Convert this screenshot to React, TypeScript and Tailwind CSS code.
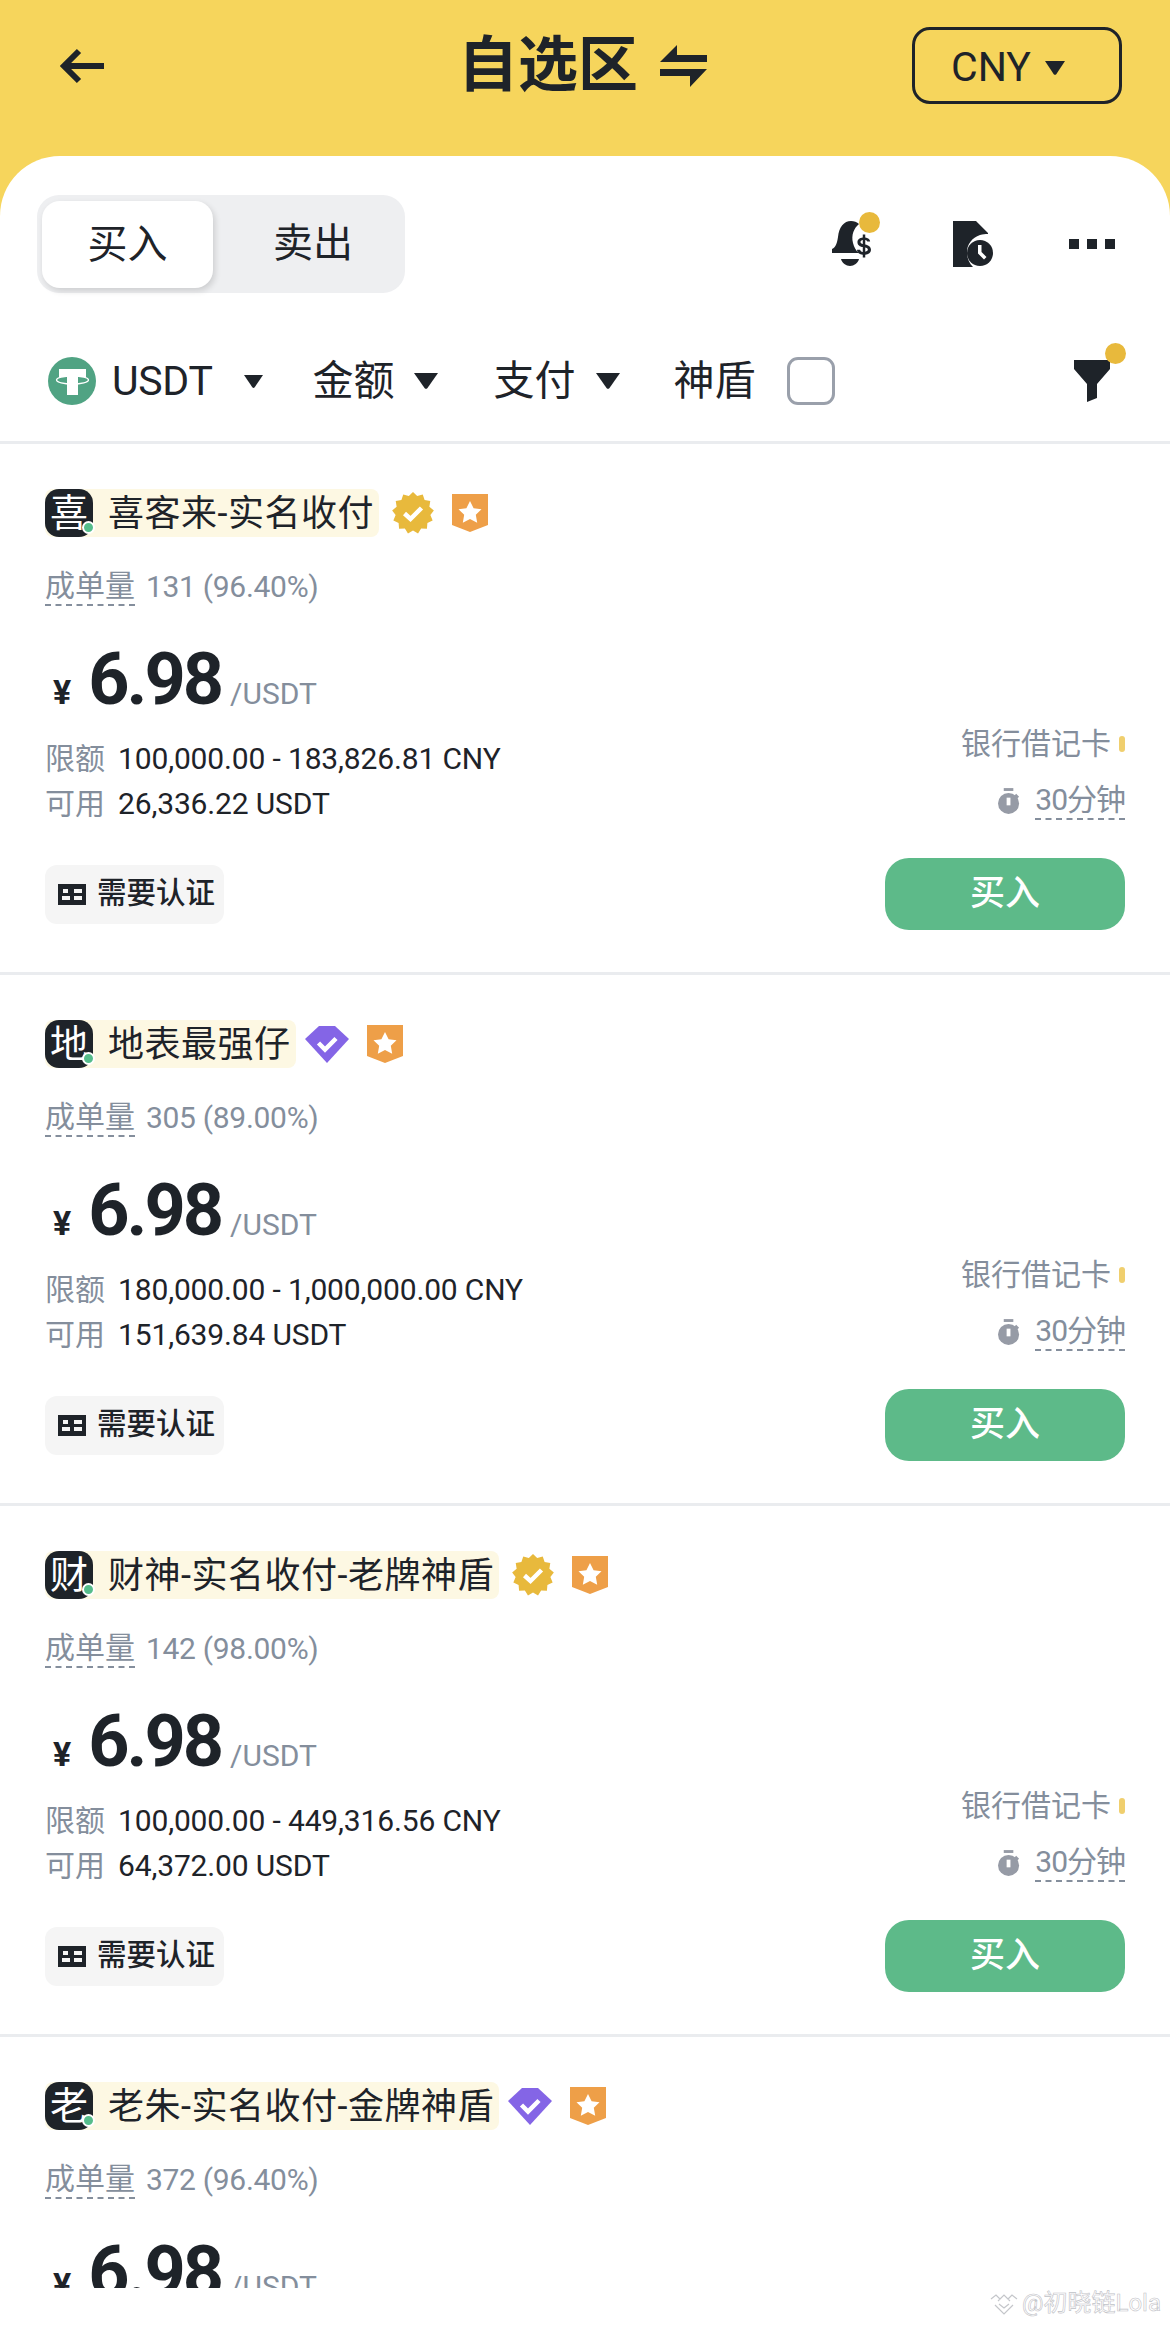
const font = "font-['Roboto','Noto_Sans_CJK_SC',sans-serif]";

type Offer = {
	avatar: string;
	name: string;
	badge: 'gold' | 'purple';
	orders: string;
	limit: string;
	available: string;
};

const offers: Offer[] = [
	{ avatar: '喜', name: '喜客来-实名收付', badge: 'gold', orders: '131 (96.40%)', limit: '100,000.00 - 183,826.81 CNY', available: '26,336.22 USDT' },
	{ avatar: '地', name: '地表最强仔', badge: 'purple', orders: '305 (89.00%)', limit: '180,000.00 - 1,000,000.00 CNY', available: '151,639.84 USDT' },
	{ avatar: '财', name: '财神-实名收付-老牌神盾', badge: 'gold', orders: '142 (98.00%)', limit: '100,000.00 - 449,316.56 CNY', available: '64,372.00 USDT' },
	{ avatar: '老', name: '老朱-实名收付-金牌神盾', badge: 'purple', orders: '372 (96.40%)', limit: '100,000.00 - 449,316.56 CNY', available: '64,372.00 USDT' },
];

function Caret({ className }: { className: string }) {
	return (
		<svg viewBox="0 0 24 16" className={className} fill="#1e2329" preserveAspectRatio="none">
			<path d="M0 0h24L13.500 15a2 2 0 0 1-3 0z" />
		</svg>
	);
}

function Dot({ className }: { className: string }) {
	return <span className={`absolute h-[21px] w-[21px] rounded-full bg-[#e8b93c] ${className}`} />;
}

function GoldBadge() {
	const points = Array.from({ length: 26 }, (_, i) => {
		const r = i % 2 ? 17.5 : 21;
		const a = (i * Math.PI) / 13;
		return `${21 + r * Math.sin(a)},${21 - r * Math.cos(a)}`;
	}).join(' ');
	return (
		<svg viewBox="0 0 42 42" className="h-[42px] w-[42px]">
			<polygon points={points} fill="#e8b93c" />
			<path d="M12.500 21.500l6 5.500 11-11" fill="none" stroke="#fff" strokeWidth="4.500" />
		</svg>
	);
}

function PurpleBadge() {
	return (
		<svg viewBox="0 0 44 37" className="h-[37px] w-[44px]">
			<path d="M14 0h16l14 13-22 24L0 13z" fill="#8465e6" />
			<path d="M13.500 17l6.500 6.500 11-11" fill="none" stroke="#fff" strokeWidth="4.500" />
		</svg>
	);
}

function Shield() {
	return (
		<svg viewBox="0 0 36 38" className="h-[38px] w-[36px]">
			<path d="M0 0h36v31l-18 7-18-7z" fill="#ee9f48" />
			<path d="M18 7l3.600 7.200 7.900 1.100-5.700 5.500 1.400 7.900-7.200-3.800-7.200 3.800 1.400-7.900-5.700-5.500 7.900-1.100z" fill="#fff" />
		</svg>
	);
}

function OfferCard({ offer }: { offer: Offer }) {
	return (
		<div className="flex h-[531px] shrink-0 flex-col border-b-[3px] border-[#eaecef] pl-[45px] pr-[45px] pt-[45px]">
			<div className="flex h-[48px] items-center">
				<div className="flex h-[48px] items-center rounded-[8px] bg-[#fdf8e3] pr-[5px]">
					<div className="relative flex h-[48px] w-[48px] items-center justify-center rounded-[14px] bg-[#1e2329] text-[38px] leading-none text-white">
						{offer.avatar}
						<span className="absolute bottom-[3px] right-[-2px] h-[13px] w-[13px] rounded-full border-[2px] border-white bg-[#56bd8b]" />
					</div>
					<span className="ml-[15px] pt-[2px] text-[36px] leading-none tracking-[0.5px] text-[#1e2329]">{offer.name}</span>
				</div>
				<div className={offer.badge === 'gold' ? 'ml-[13px]' : 'ml-[9px]'}>
					{offer.badge === 'gold' ? <GoldBadge /> : <PurpleBadge />}
				</div>
				<div className="ml-[18px]">
					<Shield />
				</div>
			</div>

			<div className="mt-[31px] flex items-center text-[30px] leading-[36px] text-[#848e9c]">
				<span className="border-b-[2px] border-dashed border-[#848e9c]">成单量</span>
				<span className="ml-[11px] tracking-[-0.3px]">{offer.orders}</span>
			</div>

			<div className="mt-[36px] flex h-[76px] items-baseline pl-[8px]">
				<span className="text-[34px] font-bold leading-none text-[#1e2329]">¥</span>
				<span className="ml-[17px] text-[72px] font-bold leading-[76px] tracking-[-3px] text-[#1e2329]">6.98</span>
				<span className="ml-[9px] text-[30px] leading-none text-[#848e9c]">/USDT</span>
			</div>

			<div className="flex justify-between">
				<div className="mt-[18px] text-[30px] leading-[45px]">
					<div className="flex">
						<span className="w-[73px] text-[#848e9c]">限额</span>
						<span className="tracking-[-0.15px] text-[#1e2329]">{offer.limit}</span>
					</div>
					<div className="flex">
						<span className="w-[73px] text-[#848e9c]">可用</span>
						<span className="tracking-[-0.15px] text-[#1e2329]">{offer.available}</span>
					</div>
				</div>
				<div className="mt-[8px] flex flex-col items-end text-[30px] leading-[36px] text-[#848e9c]">
					<div className="flex items-center">
						<span>银行借记卡</span>
						<span className="ml-[8px] h-[16px] w-[6px] rounded-full bg-[#f0cf6e]" />
					</div>
					<div className="mt-[20px] flex items-center">
						<svg viewBox="0 0 24 28" className="h-[27px] w-[23px]" fill="#969ba6">
							<path d="M6 0h10v3H6z" />
							<circle cx="11" cy="16" r="11" />
							<path d="M19 6l3 3-3 3-3-3z" />
							<path d="M9 10h4v8H9z" fill="#fff" />
						</svg>
						<span className="ml-[14px] border-b-[2px] border-dashed border-[#848e9c] tracking-[-1px]">30分钟</span>
					</div>
				</div>
			</div>

			<div className="mt-[32px] flex items-center justify-between">
				<div className="flex h-[59px] items-center rounded-[12px] bg-[#f5f5f5] pl-[13px] pr-[9px]">
					<svg viewBox="0 0 28 21" className="h-[21px] w-[28px]" fill="#1e2329">
						<path fillRule="evenodd" d="M0 0h28v21H0zM5 5v4h5V5zM4 12v4h8v-4zM16 5v4h8V5zM16 12v4h8v-4z" />
					</svg>
					<span className="ml-[11px] text-[29.500px] font-medium leading-none text-[#1e2329]">需要认证</span>
				</div>
				<button className="flex h-[72px] w-[240px] items-center justify-center rounded-[24px] bg-[#5dba89] text-[35px] font-medium text-white">
					买入
				</button>
			</div>
		</div>
	);
}

export default function App() {
	return (
		<div className={`relative h-[2325px] w-[1170px] overflow-hidden bg-white ${font}`}>
			<header className="flex h-[216px] items-start bg-[#f6d55c] pl-[58px] pr-[48px] pt-[27px]">
				<svg viewBox="0 0 46 36" className="mt-[21px] h-[36px] w-[46px]" fill="none" stroke="#1e2329" strokeWidth="6">
					<path d="M46 18H6M21 3L6 18l15 15" />
				</svg>
				<div className="ml-[354px] flex h-[77px] items-center">
					<span className="text-[60px] font-bold leading-none text-[#1e2329]">自选区</span>
					<svg viewBox="0 0 47 42" className="ml-[22px] h-[42px] w-[47px]" fill="#1e2329">
						<path d="M17 0v10h30v7H0zM0 24h47L30 42V31H0z" />
					</svg>
				</div>
				<div className="ml-auto flex h-[77px] w-[210px] items-center rounded-[18px] border-[3px] border-[#1e2329] pl-[36px] pt-[4px] text-[41px] leading-none text-[#1e2329]">
					CNY
					<Caret className="ml-[14px] h-[14px] w-[20px]" />
				</div>
			</header>

			<main className="mt-[-60px] flex h-[2169px] flex-col rounded-t-[60px] bg-white">
				<div className="relative flex h-[288px] shrink-0 flex-col border-b-[3px] border-[#eaecef]">
					<div className="flex items-center pl-[37px] pr-[55px] pt-[39px]">
						<div className="flex h-[98px] w-[368px] rounded-[22px] bg-[#eeeff1] text-[40px] text-[#1e2329]">
							<div className="ml-[5px] mt-[6px] flex h-[87px] w-[171px] items-center justify-center rounded-[18px] bg-white shadow-[2px_3px_6px_rgba(0,0,0,0.14)]">
								买入
							</div>
							<div className="flex flex-1 items-center justify-center pl-[8px]">卖出</div>
						</div>
						<div className="ml-auto flex items-center">
							<div className="relative h-[46px] w-[41px]">
								<svg viewBox="0 0 41 46" className="h-[46px] w-[41px]" fill="#1e2329">
									<path d="M0 32v-4c4-2 5-6 6-12C7 6 12 0 19 0c3 0 6 1 8 3-5 4-8 11-6 19 1 4 3 8 6 10z" />
									<path d="M9 38h18c-1 4-5 7-9 7-4 0-8-3-9-7z" />
									<path d="M32 8v3.500c3 .5 6 2 6 5h-3.500c-.5-1-1-1.500-2.500-1.800v5.300c4 1 7 2.500 7 6.500 0 3.500-3 5.500-7 6v3.500h-3v-3.500c-4-.5-7-2.500-7-6h3.700c.3 1.500 1.500 2.500 3.300 2.800v-6c-3.500-.8-6.500-2.300-6.500-6 0-3.500 3-5.300 6.500-5.700V8zm-3 6.700c-1.500.3-2.800 1-2.800 2.300s1.300 2 2.800 2.500zm3 9.200v5c1.700-.3 3.200-1.200 3.200-2.600 0-1.300-1.500-2-3.200-2.400z" transform="translate(7 7) scale(.82)" />
								</svg>
								<Dot className="right-[-7px] top-[-9px]" />
							</div>
							<svg viewBox="0 0 40 46" className="ml-[80px] h-[46px] w-[40px]" fill="#1e2329">
								<path d="M0 0h23l12 12v1c-3 0-5 0-8 1-8 3-13 9-13 17 0 6 2 11 6 15H0z" />
								<circle cx="27" cy="32" r="13" />
								<path d="M25 24h3.500v7l5 5-2.500 2.500-6-6z" fill="#fff" />
							</svg>
							<div className="ml-[76px] flex gap-[8px]">
								<span className="h-[10px] w-[10px] bg-[#1e2329]" />
								<span className="h-[10px] w-[10px] bg-[#1e2329]" />
								<span className="h-[10px] w-[10px] bg-[#1e2329]" />
							</div>
						</div>
					</div>

					<div className="mt-[64px] flex items-center pl-[48px] pr-[60px] text-[41px] leading-[48px] text-[#1e2329]">
						<svg viewBox="0 0 48 48" className="h-[48px] w-[48px]">
							<circle cx="24" cy="24" r="24" fill="#50a383" />
							<ellipse cx="24.500" cy="23" rx="16" ry="4" fill="none" stroke="#fff" strokeWidth="1.300" />
							<path d="M11 12h27v8H30v18H19V20h-8z" fill="#fff" />
						</svg>
						<span className="ml-[16px] tracking-[-0.3px]">USDT</span>
						<Caret className="ml-[31px] h-[13px] w-[19px]" />
						<span className="ml-[50px]">金额</span>
						<Caret className="ml-[19px] h-[16px] w-[24px]" />
						<span className="ml-[56px]">支付</span>
						<Caret className="ml-[20px] h-[16px] w-[24px]" />
						<span className="ml-[54px]">神盾</span>
						<span className="ml-[31px] h-[48px] w-[48px] rounded-[11px] border-[3px] border-[#9aa0ab]" />
						<div className="relative ml-auto h-[42px] w-[36px]">
							<svg viewBox="0 0 36 42" className="h-[42px] w-[36px]" fill="#1e2329">
								<path d="M0 0h36v9L23 24v14l-10 4V24L0 9z" />
							</svg>
							<Dot className="right-[-16px] top-[-17px]" />
						</div>
					</div>
				</div>

				<div className="h-[1844px] shrink-0 overflow-hidden">
					{offers.map((offer) => (
						<OfferCard key={offer.avatar} offer={offer} />
					))}
				</div>
			</main>

			<div className="absolute bottom-[10px] right-[9px] flex items-center text-[24px] leading-none text-transparent [-webkit-text-stroke:0.6px_#bfc2c7]">
				<svg viewBox="0 0 28 24" className="mr-[4px] h-[24px] w-[28px]" fill="none" stroke="#c4c6ca" strokeWidth="1.200">
					<path d="M1 8l5-4 4 4M27 8l-5-4-4 4M8 10l6-6 6 6M9 13l5 4 5-4M5 14l9 9 9-9" />
				</svg>
				@初晓链Lola
			</div>
		</div>
	);
}
